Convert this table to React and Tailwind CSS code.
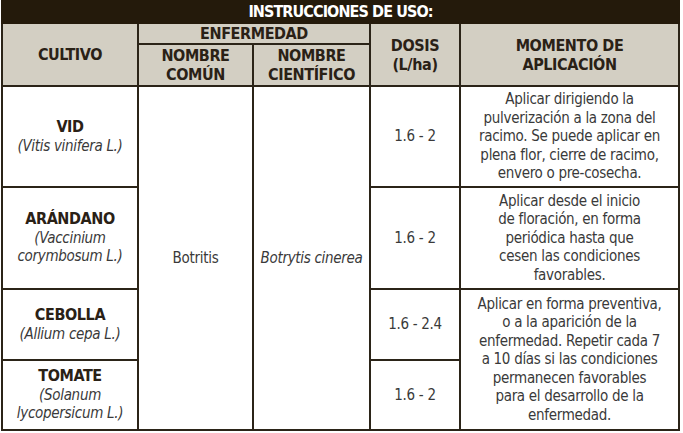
import React from 'react';

const font = { fontFamily: '"Liberation Sans Narrow", "DejaVu Sans Condensed", "Roboto Condensed", "Liberation Sans", sans-serif' };

const cultivos = [
  { name: 'VID', latin: ['(Vitis vinifera L.)'], dose: '1.6 - 2', h: 'h-[101px]' },
  { name: 'ARÁNDANO', latin: ['(Vaccinium', 'corymbosum L.)'], dose: '1.6 - 2', h: 'h-[102px]' },
  { name: 'CEBOLLA', latin: ['(Allium cepa L.)'], dose: '1.6 - 2.4', h: 'h-[71px]' },
  { name: 'TOMATE', latin: ['(Solanum', 'lycopersicum L.)'], dose: '1.6 - 2', h: 'h-[70px]' },
];

const momentos = [
  ['Aplicar dirigiendo la', 'pulverización a la zona del', 'racimo. Se puede aplicar en', 'plena flor, cierre de racimo,', 'envero o pre-cosecha.'],
  ['Aplicar desde el inicio', 'de floración, en forma', 'periódica hasta que', 'cesen las condiciones', 'favorables.'],
  ['Aplicar en forma preventiva,', 'o a la aparición de la', 'enfermedad. Repetir cada 7', 'a 10 días si las condiciones', 'permanecen favorables', 'para el desarrollo de la', 'enfermedad.'],
];

const th = 'border-2 border-[#2b2418] bg-[#d3cfc3] text-[#2a2116] font-bold text-[16px] leading-[19px] tracking-[-0.4px] text-center align-middle p-0';
const td = 'border-2 border-[#2b2418] text-[#3a3a3a] text-[15px] leading-[18.5px] tracking-[-0.3px] text-center align-middle p-0';

export default function App() {
  return (
    <div className="w-[683px] h-[433px] bg-white overflow-hidden" style={font}>
      <table className="ml-px w-[677px] border-collapse table-fixed">
        <colgroup>
          <col className="w-[136px]" />
          <col className="w-[115px]" />
          <col className="w-[117px]" />
          <col className="w-[90px]" />
          <col className="w-[219px]" />
        </colgroup>
        <thead>
          <tr className="h-[22px]">
            <th colSpan={5} className="bg-[#241a0b] text-white font-bold text-[16px] leading-[18px] tracking-[-0.9px] text-center border-2 border-[#241a0b] p-0">
              INSTRUCCIONES DE USO:
            </th>
          </tr>
          <tr className="h-[21px]">
            <th rowSpan={2} className={th}>CULTIVO</th>
            <th colSpan={2} className={th}>ENFERMEDAD</th>
            <th rowSpan={2} className={th}>DOSIS<br />(L/ha)</th>
            <th rowSpan={2} className={th}>MOMENTO DE<br />APLICACIÓN</th>
          </tr>
          <tr className="h-[42px]">
            <th className={th}>NOMBRE<br />COMÚN</th>
            <th className={th}>NOMBRE<br />CIENTÍFICO</th>
          </tr>
        </thead>
        <tbody>
          {cultivos.map((c, i) => (
            <tr key={c.name} className={c.h}>
              <td className={td}>
                <div className="font-bold text-[16px] tracking-[-0.4px] text-[#2a2116]">{c.name}</div>
                {c.latin.map((l) => (
                  <div key={l} className="italic">{l}</div>
                ))}
              </td>
              {i === 0 && (
                <>
                  <td rowSpan={4} className={td}>Botritis</td>
                  <td rowSpan={4} className={td + ' italic'}>Botrytis cinerea</td>
                </>
              )}
              <td className={td}>{c.dose}</td>
              {i < 3 && (
                <td rowSpan={i === 2 ? 2 : 1} className={td}>
                  {momentos[i].map((l) => (
                    <div key={l}>{l}</div>
                  ))}
                </td>
              )}
            </tr>
          ))}
        </tbody>
      </table>
    </div>
  );
}
